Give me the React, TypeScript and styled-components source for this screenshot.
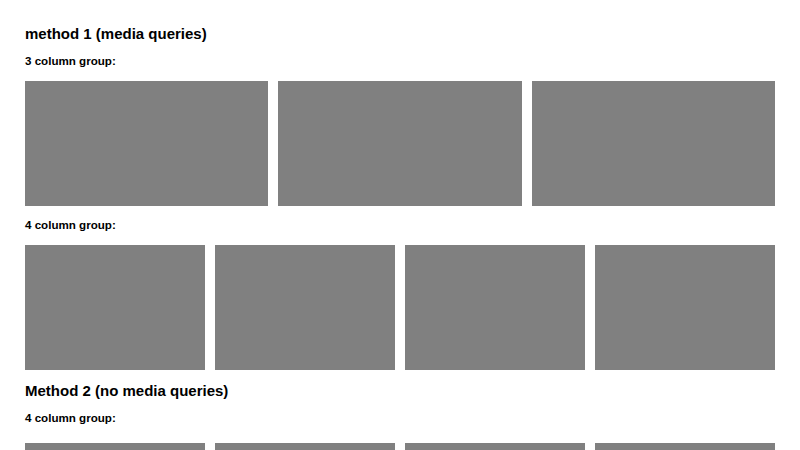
import React from "react";
import styled, { createGlobalStyle } from "styled-components";

const GlobalStyle = createGlobalStyle`
  body {
    margin: 0;
    background: #ffffff;
    font-family: "Liberation Sans", Arial, sans-serif;
    color: #000000;
  }
`;

const Page = styled.div`
  padding: 25px 25px 0;
`;

const Title = styled.h2`
  margin: 0 0 12px;
  font-size: 15px;
  line-height: 17px;
  font-weight: bold;
`;

const Label = styled.h4`
  margin: 0 0 13px;
  font-size: 11.6px;
  line-height: 14px;
  font-weight: bold;
`;

// margins collapse with the label above, so $lead is the full gap
const Group = styled.div<{ $cols: number; $lead?: number }>`
  display: grid;
  grid-template-columns: repeat(${(p) => p.$cols}, 1fr);
  gap: 10px;
  margin: ${(p) => p.$lead ?? 0}px 0 12px;
`;

const Tile = styled.div`
  height: 125px;
  background: #808080;
`;

const TileGroup = ({ cols, lead }: { cols: number; lead?: number }) => (
  <Group $cols={cols} $lead={lead}>
    {Array.from({ length: cols }, (_, i) => (
      <Tile key={i} />
    ))}
  </Group>
);

export default function App() {
  return (
    <>
      <GlobalStyle />
      <Page>
        <Title>method 1 (media queries)</Title>
        <Label>3 column group:</Label>
        <TileGroup cols={3} />
        <Label>4 column group:</Label>
        <TileGroup cols={4} />
        <Title>Method 2 (no media queries)</Title>
        <Label>4 column group:</Label>
        <TileGroup cols={4} lead={18} />
      </Page>
    </>
  );
}
